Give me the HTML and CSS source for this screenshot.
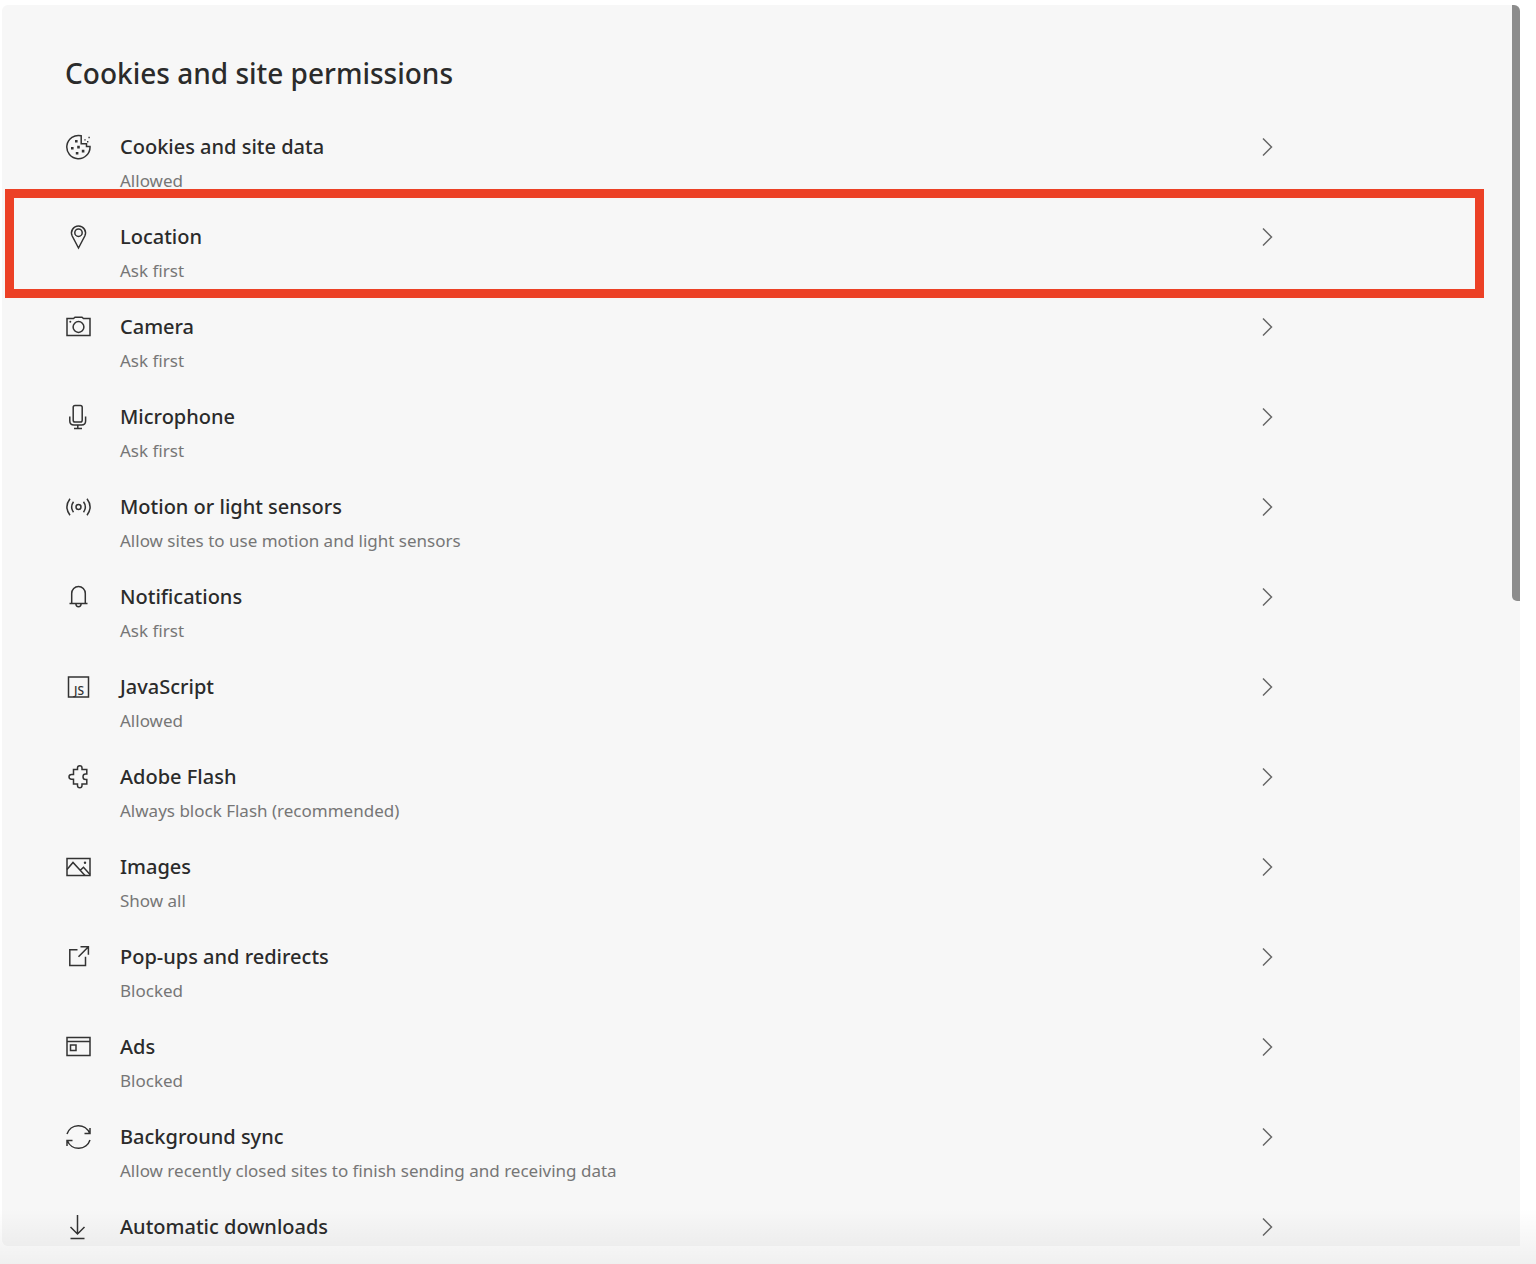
FILE: index.html
```html
<!DOCTYPE html>
<html lang="en">
<head>
    <meta charset="UTF-8">
    <meta name="viewport" content="width=device-width, initial-scale=1.0">
    <title>Cookies and site permissions</title>
    <link rel="stylesheet" href="styles.css">
</head>
<body>
    <!-- Shared chevron -->
    <svg class="defs" aria-hidden="true">
        <symbol id="chevron" viewBox="0 0 12 20">
            <path d="M1 1.5 L9.5 10 L1 18.5"/>
        </symbol>
    </svg>

    <main class="panel">
        <h1>Cookies and site permissions</h1>

        <ul class="permissions">
            <li>
                <button type="button" class="row">
                    <svg class="icon" viewBox="0 0 26 26" aria-hidden="true">
                        <path d="M16.2 1.8 A11.6 11.6 0 1 0 25 12.5 H21.5 V9.8 H16.2 Z"/>
                        <path class="solid" d="M10 6h2.6v2.6H10z M12.2 11.8h2.6v2.6h-2.6z M6 13h2.6v2.6H6z M16.8 15.8h2.6v2.6h-2.6z M10.8 18h2.6v2.6h-2.6z M19.3 5.2h1.4v1.4h-1.4z M23.4 2.8h1.4v1.4h-1.4z M22 7h1.4v1.4H22z"/>
                    </svg>
                    <span class="name">Cookies and site data</span>
                    <svg class="chevron" aria-hidden="true"><use href="#chevron"/></svg>
                    <span class="status">Allowed</span>
                </button>
            </li>
            <li class="highlighted">
                <button type="button" class="row">
                    <svg class="icon" viewBox="0 0 26 26" aria-hidden="true">
                        <path d="M13.5 24 L7.2 12 A7 7 0 1 1 19.8 12 Z"/>
                        <circle cx="13.5" cy="8.7" r="3.7"/>
                    </svg>
                    <span class="name">Location</span>
                    <svg class="chevron" aria-hidden="true"><use href="#chevron"/></svg>
                    <span class="status">Ask first</span>
                </button>
            </li>
            <li>
                <button type="button" class="row">
                    <svg class="icon" viewBox="0 0 26 26" aria-hidden="true">
                        <path d="M2 4.5 H8.5 L10 3.2 H17 L18.5 4.5 H25 V21.5 H2 Z"/>
                        <circle cx="13.5" cy="13" r="5.4"/>
                        <circle class="solid" cx="5.3" cy="7.8" r="1"/>
                    </svg>
                    <span class="name">Camera</span>
                    <svg class="chevron" aria-hidden="true"><use href="#chevron"/></svg>
                    <span class="status">Ask first</span>
                </button>
            </li>
            <li>
                <button type="button" class="row">
                    <svg class="icon" viewBox="0 0 26 26" aria-hidden="true">
                        <rect x="8.2" y="1.5" width="9" height="16.5" rx="1.8"/>
                        <path d="M4.8 12.5 V17 Q4.8 21 9 21 H16.5 Q20.6 21 20.6 17 V12.5 M12.8 21 V24.5 M9 24.5 H17"/>
                    </svg>
                    <span class="name">Microphone</span>
                    <svg class="chevron" aria-hidden="true"><use href="#chevron"/></svg>
                    <span class="status">Ask first</span>
                </button>
            </li>
            <li>
                <button type="button" class="row">
                    <svg class="icon" viewBox="0 0 26 26" aria-hidden="true">
                        <circle cx="13.5" cy="13" r="2.5"/>
                        <path d="M8.5 7.8 Q4.8 13 8.5 18.2 M18.5 7.8 Q22.2 13 18.5 18.2 M5 4.8 Q-1.2 13 5 21.2 M22 4.8 Q28.2 13 22 21.2"/>
                    </svg>
                    <span class="name">Motion or light sensors</span>
                    <svg class="chevron" aria-hidden="true"><use href="#chevron"/></svg>
                    <span class="status">Allow sites to use motion and light sensors</span>
                </button>
            </li>
            <li>
                <button type="button" class="row">
                    <svg class="icon" viewBox="0 0 26 26" aria-hidden="true">
                        <path d="M6.7 19.5 V9.5 A6.8 7 0 0 1 20.3 9.5 V19.5 M4.5 19.5 H22.5 M10.8 19.5 Q11 22.8 13.5 22.8 Q16 22.8 16.2 19.5"/>
                    </svg>
                    <span class="name">Notifications</span>
                    <svg class="chevron" aria-hidden="true"><use href="#chevron"/></svg>
                    <span class="status">Ask first</span>
                </button>
            </li>
            <li>
                <button type="button" class="row">
                    <svg class="icon" viewBox="0 0 26 26" aria-hidden="true">
                        <rect x="3.5" y="3" width="20" height="20"/>
                        <text x="9" y="20.5">JS</text>
                    </svg>
                    <span class="name">JavaScript</span>
                    <svg class="chevron" aria-hidden="true"><use href="#chevron"/></svg>
                    <span class="status">Allowed</span>
                </button>
            </li>
            <li>
                <button type="button" class="row">
                    <svg class="icon" viewBox="0 0 26 26" aria-hidden="true">
                        <path d="M8.5 5.5 H12.5 V4 Q12.5 1.8 14.8 1.8 Q17 1.8 17 4 V5.5 H21.8 V10 H20.5 Q18 10 18 12.7 Q18 15.5 20.5 15.5 H21.8 V20 H17 V21.5 Q17 23.8 14.8 23.8 Q12.5 23.8 12.5 21.5 V20 H8.5 V15.2 H6.5 Q4 15.2 4 12.8 Q4 10.4 6.5 10.4 H8.5 Z"/>
                    </svg>
                    <span class="name">Adobe Flash</span>
                    <svg class="chevron" aria-hidden="true"><use href="#chevron"/></svg>
                    <span class="status">Always block Flash (recommended)</span>
                </button>
            </li>
            <li>
                <button type="button" class="row">
                    <svg class="icon" viewBox="0 0 26 26" aria-hidden="true">
                        <rect x="2" y="4.5" width="23" height="17"/>
                        <path d="M2 15.5 L8 8.5 L20 21.5 M15 16.5 L18.5 13.3 L25 20.5"/>
                        <circle class="solid" cx="20" cy="8.8" r="1.2"/>
                    </svg>
                    <span class="name">Images</span>
                    <svg class="chevron" aria-hidden="true"><use href="#chevron"/></svg>
                    <span class="status">Show all</span>
                </button>
            </li>
            <li>
                <button type="button" class="row">
                    <svg class="icon" viewBox="0 0 26 26" aria-hidden="true">
                        <path d="M12.5 5.8 H4.8 V21.5 H20.5 V12.8 M13.5 12.8 L23.2 3 M15.5 2.8 H23.4 V10.8"/>
                    </svg>
                    <span class="name">Pop-ups and redirects</span>
                    <svg class="chevron" aria-hidden="true"><use href="#chevron"/></svg>
                    <span class="status">Blocked</span>
                </button>
            </li>
            <li>
                <button type="button" class="row">
                    <svg class="icon" viewBox="0 0 26 26" aria-hidden="true">
                        <path d="M2 3.5 H25 V21.5 H2 Z M2 7.5 H25 M5.5 11 H11 V16.5 H5.5 Z"/>
                    </svg>
                    <span class="name">Ads</span>
                    <svg class="chevron" aria-hidden="true"><use href="#chevron"/></svg>
                    <span class="status">Blocked</span>
                </button>
            </li>
            <li>
                <button type="button" class="row">
                    <svg class="icon" viewBox="0 0 26 26" aria-hidden="true">
                        <path d="M2 10 A12 12 0 0 1 24.6 9.3 M25 4 V9.5 H19.5 M25 16 A12 12 0 0 1 2.4 16.7 M2 22 V16.5 H7.5"/>
                    </svg>
                    <span class="name">Background sync</span>
                    <svg class="chevron" aria-hidden="true"><use href="#chevron"/></svg>
                    <span class="status">Allow recently closed sites to finish sending and receiving data</span>
                </button>
            </li>
            <li>
                <button type="button" class="row">
                    <svg class="icon" viewBox="0 0 26 26" aria-hidden="true">
                        <path d="M12.5 1 V20 M5.5 13 L12.5 20 L19.5 13 M5.5 24.5 H19.5"/>
                    </svg>
                    <span class="name">Automatic downloads</span>
                    <svg class="chevron" aria-hidden="true"><use href="#chevron"/></svg>
                </button>
            </li>
        </ul>

        <div class="scroll-thumb"></div>
    </main>
    <div class="bottom-shade"></div>
</body>
</html>
```

FILE: styles.css
```css
* {
    box-sizing: border-box;
    margin: 0;
    padding: 0;
}

body {
    position: relative;
    display: flex;
    height: 100vh;
    padding: 5px 16px 18px 2px;
    overflow: hidden;
    background: #fff;
    color: #2b2b2b;
    font-family: "Segoe UI", "Noto Sans", "Open Sans", sans-serif;
}

.defs {
    position: absolute;
    width: 0;
    height: 0;
}

.panel {
    position: relative;
    flex: 1;
    padding: 48px 240px 0 63px;
    overflow: hidden;
    background: #f7f7f7;
    border-radius: 6px 6px 0 6px;
}

h1 {
    margin-bottom: 32px;
    font-size: 28px;
    font-weight: 500;
    line-height: 40px;
}

.permissions {
    list-style: none;
}

/* One setting: icon, name and arrow, with the status below the name */
.row {
    display: grid;
    grid-template-columns: 26px 1fr 12px;
    column-gap: 29px;
    row-gap: 8px;
    align-items: center;
    width: 100%;
    padding: 8px 6px 22px 0;
    border: 0;
    background: none;
    color: inherit;
    font-family: inherit;
    text-align: left;
    cursor: pointer;
}

.name {
    font-size: 20px;
    font-weight: 500;
    line-height: 28px;
}

.status {
    grid-column: 2;
    color: #767676;
    font-size: 17px;
    line-height: 24px;
}

.icon {
    width: 26px;
    height: 26px;
    fill: none;
    stroke: #333;
    stroke-width: 1.5;
}

.icon .solid {
    fill: #333;
    stroke: none;
}

.icon text {
    fill: #333;
    stroke: none;
    font-size: 12px;
    font-weight: 500;
}

.chevron {
    width: 12px;
    height: 20px;
    fill: none;
    stroke: #666;
    stroke-width: 1.5;
}

/* Red frame round the location setting */
.highlighted {
    position: relative;
}

.highlighted::after {
    content: "";
    position: absolute;
    top: -26px;
    right: -204px;
    bottom: 7px;
    left: -60px;
    border: 9px solid #ec4126;
    pointer-events: none;
}

.scroll-thumb {
    position: absolute;
    top: 0;
    right: 0;
    width: 8px;
    height: 48%;
    background: #8c8c8c;
    border-radius: 0 3px 0 5px;
}

.bottom-shade {
    position: absolute;
    right: 0;
    bottom: 0;
    left: 0;
    height: 56px;
    background: linear-gradient(rgba(0, 0, 0, 0), rgba(0, 0, 0, 0.06));
    pointer-events: none;
}
```
